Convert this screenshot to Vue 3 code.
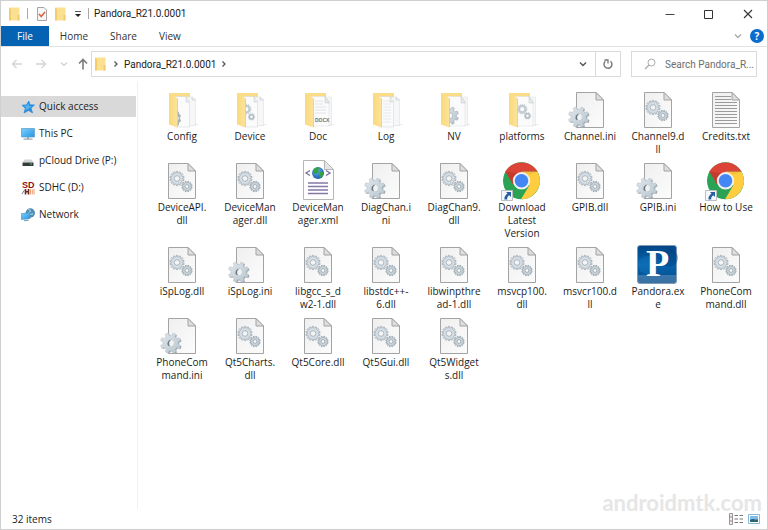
<script setup>
const places = [
  { name: 'Quick access', icon: 'star', active: true },
  { name: 'This PC', icon: 'pc' },
  { name: 'pCloud Drive (P:)', icon: 'drive' },
  { name: 'SDHC (D:)', icon: 'sd' },
  { name: 'Network', icon: 'network' },
]

// A "|" marks where a long file name wraps.
const files = [
  ['Config', 'folder-config'],
  ['Device', 'folder-device'],
  ['Doc', 'folder-doc'],
  ['Log', 'folder-log'],
  ['NV', 'folder-nv'],
  ['platforms', 'folder-platforms'],
  ['Channel.ini', 'ini'],
  ['Channel9.d|ll', 'dll'],
  ['Credits.txt', 'txt'],
  ['DeviceAPI.|dll', 'dll'],
  ['DeviceMan|ager.dll', 'dll'],
  ['DeviceMan|ager.xml', 'xml'],
  ['DiagChan.i|ni', 'ini'],
  ['DiagChan9.|dll', 'dll'],
  ['Download|Latest|Version', 'chrome'],
  ['GPIB.dll', 'dll'],
  ['GPIB.ini', 'ini'],
  ['How to Use', 'chrome'],
  ['iSpLog.dll', 'dll'],
  ['iSpLog.ini', 'ini'],
  ['libgcc_s_d|w2-1.dll', 'dll'],
  ['libstdc++-|6.dll', 'dll'],
  ['libwinpthre|ad-1.dll', 'dll'],
  ['msvcp100.|dll', 'dll'],
  ['msvcr100.d|ll', 'dll'],
  ['Pandora.ex|e', 'pandora'],
  ['PhoneCom|mand.dll', 'dll'],
  ['PhoneCom|mand.ini', 'ini'],
  ['Qt5Charts.|dll', 'dll'],
  ['Qt5Core.dll', 'dll'],
  ['Qt5Gui.dll', 'dll'],
  ['Qt5Widget|s.dll', 'dll'],
].map(([name, icon]) => ({ lines: name.split('|'), icon }))

function gear(cx, cy, outer, inner, hole, teeth) {
  const points = []
  const step = (Math.PI * 2) / teeth
  const at = (r, a) => `${(cx + r * Math.cos(a)).toFixed(2)} ${(cy + r * Math.sin(a)).toFixed(2)}`
  for (let i = 0; i < teeth; i++) {
    const a = (i + 0.5) * step
    points.push(at(inner, a - step * 0.3), at(outer, a - step * 0.18), at(outer, a + step * 0.18), at(inner, a + step * 0.3))
  }
  return `M${points.join('L')}ZM${cx - hole} ${cy}a${hole} ${hole} 0 1 0 ${hole * 2} 0a${hole} ${hole} 0 1 0 ${-hole * 2} 0Z`
}

const gearLarge = gear(15, 17.5, 7.2, 5.7, 2.8, 14)
const gearSmall = gear(25, 25.5, 5.3, 4.1, 1.9, 12)
const gearIni = gear(8.5, 27, 10.2, 7.6, 3.3, 8)
</script>

<template>
  <svg class="sprite" aria-hidden="true">
    <defs>
      <linearGradient id="paper" x1="0" y1="0" x2="1" y2="1">
        <stop offset="0" stop-color="#efefef" /><stop offset="1" stop-color="#fcfcfc" />
      </linearGradient>
      <linearGradient id="yellow" x1="0" y1="0" x2="1" y2="0">
        <stop offset="0" stop-color="#fbd97c" /><stop offset="1" stop-color="#fce49b" />
      </linearGradient>
      <linearGradient id="metal" x1="0" y1="0" x2="1" y2="1">
        <stop offset="0" stop-color="#dfe7ec" /><stop offset="1" stop-color="#b9c5cd" />
      </linearGradient>
      <linearGradient id="screen" x1="0" y1="0" x2="1" y2="1">
        <stop offset="0" stop-color="#7fd0fb" /><stop offset="1" stop-color="#2197e6" />
      </linearGradient>
      <linearGradient id="navy" x1="0" y1="0" x2="0" y2="1">
        <stop offset="0" stop-color="#034585" /><stop offset="0.5" stop-color="#0565ae" /><stop offset="1" stop-color="#064a88" />
      </linearGradient>
      <radialGradient id="globe" cx="0.4" cy="0.3" r="0.8">
        <stop offset="0" stop-color="#63b7f1" /><stop offset="1" stop-color="#134fa4" />
      </radialGradient>
    </defs>

    <symbol id="page" viewBox="0 0 40 40">
      <path d="M6.5 2.5H26L33.5 10V37.5H6.5Z" fill="url(#paper)" stroke="#a3a3a3" />
      <path d="M26 2.5V10H33.5Z" fill="#dedede" stroke="#a3a3a3" stroke-linejoin="round" />
    </symbol>
    <symbol id="dll" viewBox="0 0 40 40">
      <use href="#page" />
      <path :d="gearLarge" fill="#d5dee4" stroke="#98a4ad" stroke-width=".7" fill-rule="evenodd" />
      <path :d="gearSmall" fill="#c9d4db" stroke="#8e9ba5" stroke-width=".7" fill-rule="evenodd" />
    </symbol>
    <symbol id="ini" viewBox="0 0 40 40" overflow="visible">
      <use href="#page" />
      <path :d="gearIni" transform="translate(1.2 .9)" fill="#9ba7b0" fill-rule="evenodd" />
      <path :d="gearIni" fill="url(#metal)" stroke="#b9c4cb" stroke-width=".6" fill-rule="evenodd" />
      <circle cx="8.500" cy="27" r="3.300" fill="#f0f2f3" />
      <path d="M6.200 29.700a3.700 3.700 0 0 1 3-6a5 5 0 0 0-1.200 6.600Z" fill="#6c7780" />
    </symbol>
    <symbol id="txt" viewBox="0 0 40 40">
      <use href="#page" />
      <path d="M9 6.5H25M9 9.500H25M9 12.500H31M9 15.500H31M9 18.500H31M9 21.500H31M9 24.500H31M9 27.500H31M9 30.500H31M9 33.500H31" stroke="#9b9b9b" />
    </symbol>
    <symbol id="xml" viewBox="0 0 40 40" overflow="visible">
      <path d="M5.500 -.5H26.500L35.500 8.500V38.500H5.500Z" fill="#fff" stroke="#b6b6b6" />
      <path d="M26.500 -.5V8.500H35.500Z" fill="#e6e6e6" stroke="#b6b6b6" />
      <circle cx="20" cy="12" r="6" fill="url(#globe)" />
      <path d="M16 8c2-2 5-2 6-1l-2 2 1 2-3 2-3-1c0-2 0-3 1-4ZM22 11l3 0c1 3-1 5-3 6l-1-3Z" fill="#35a344" />
      <path d="M12 9.500L8 12l4 2.500M28 9.500l4 2.500-4 2.500" fill="none" stroke="#796b9f" stroke-width="1.300" />
      <path d="M10 22H30M10 25.500H30M10 29H30M10 32.500H30" stroke="#8578a7" stroke-width="1.400" />
    </symbol>

    <symbol id="folder-back" viewBox="0 0 40 40"><path d="M7 3H28V10L16 37 7 34Z" fill="#fbdc87" /></symbol>
    <symbol id="folder-front" viewBox="0 0 40 40">
      <path d="M7 3.500L15.700 8.500V37.500L7 34.500Z" fill="url(#yellow)" />
      <path d="M15.500 8.500V37" stroke="#e4c168" stroke-width=".6" />
    </symbol>
    <symbol id="sheets" viewBox="0 0 40 40">
      <path d="M31 34h6l-6 2Z" fill="#e1e1e1" />
      <path d="M21 7H31L33.500 9.500V35.500H21Z" fill="#f6f7f8" stroke="#dfe1e3" stroke-width=".6" />
      <path d="M13 6.500H24L27.500 11V37H13Z" fill="#fbfbfc" stroke="#d5d8da" stroke-width=".6" />
      <path d="M24 6.500V12h3.500M30 7v3h3.500" fill="#e9ebec" stroke="#c8cccf" stroke-width=".6" />
    </symbol>
    <symbol id="sheet" viewBox="0 0 40 40">
      <path d="M31 34h6l-6 2Z" fill="#e1e1e1" />
      <path d="M21 7H33.500V35.500H21Z" fill="#f6f7f8" stroke="#dfe1e3" stroke-width=".6" />
      <path d="M13 6.500H27L31 11V36H13Z" fill="#fbfbfc" stroke="#dfe1e3" stroke-width=".6" />
      <path d="M27 6.500V13l4.500 0Z" fill="#e6e8e9" stroke="#c8cccf" stroke-width=".6" />
    </symbol>
    <symbol id="folder-config" viewBox="0 0 40 40">
      <use href="#folder-back" /><use href="#sheets" />
      <path d="M15 21l2 1 0 2 2 1-1 3 1 3-2 2 0 2-2 1Z" fill="#aab3b9" /><path d="M15 26l2 2-2 4Z" fill="#fff" />
      <use href="#folder-front" />
    </symbol>
    <symbol id="folder-device" viewBox="0 0 40 40">
      <use href="#folder-back" /><use href="#sheets" />
      <path :d="gearLarge" transform="translate(5 6) scale(.75)" fill="#c1cbd1" fill-rule="evenodd" />
      <path :d="gearSmall" transform="translate(4 9) scale(.7)" fill="#b2bec5" fill-rule="evenodd" />
      <use href="#folder-front" />
    </symbol>
    <symbol id="folder-doc" viewBox="0 0 40 40">
      <use href="#folder-back" /><use href="#sheet" />
      <path d="M17 11H25M17 14H25M17 17H28M17 20H28M17 23H28" stroke="#dadedf" stroke-width=".8" />
      <use href="#folder-front" />
    </symbol>
    <symbol id="folder-log" viewBox="0 0 40 40">
      <use href="#folder-back" /><use href="#sheets" />
      <path d="M17 11H23M17 14H25M17 17H25M17 20H25M17 23H25M17 26H25M17 29H25M17 32H25" stroke="#e3e5e6" stroke-width=".8" />
      <use href="#folder-front" />
    </symbol>
    <symbol id="folder-nv" viewBox="0 0 40 40">
      <use href="#folder-back" /><use href="#sheet" />
      <path :d="gearIni" transform="translate(8.500 2.500) scale(.86)" fill="url(#metal)" stroke="#98a4ad" stroke-width=".7" fill-rule="evenodd" />
      <use href="#folder-front" />
    </symbol>
    <symbol id="folder-platforms" viewBox="0 0 40 40">
      <use href="#folder-back" /><use href="#sheet" />
      <path :d="gearLarge" transform="translate(9 6) scale(.75)" fill="#c1cbd1" fill-rule="evenodd" />
      <path :d="gearSmall" transform="translate(8 8) scale(.7)" fill="#b2bec5" fill-rule="evenodd" />
      <use href="#folder-front" />
    </symbol>

    <symbol id="chrome" viewBox="0 0 40 40" overflow="visible">
      <circle cx="19.500" cy="19.800" r="18.500" fill="#2aa354" />
      <path d="M3.500 10.500A18.500 18.500 0 0 1 35.500 10.800H19.500L11.700 24.200Z" fill="#db4437" />
      <path d="M35.500 10.800A18.500 18.500 0 0 1 19 38.300L27.400 24.300 19.500 10.800Z" fill="#ffcd40" />
      <path d="M3.500 10.500L11.700 24.200 15 12Z" fill="#c43b30" />
      <path d="M19.500 10.800H35.500L27.500 13.500Z" fill="#e9b537" opacity=".5" />
      <circle cx="19.500" cy="19.800" r="8.700" fill="#f1f1f1" />
      <circle cx="19.500" cy="19.800" r="6.800" fill="#4387f4" />
      <path d="M-.5 29.500H10.500V39.500H-.5Z" fill="#f5f7f9" stroke="#b9bec3" />
      <path d="M4 31h5v5L7.300 34.300C5.500 35.500 5 37 5.200 38.500H2.500C2 36 3.500 34 5.500 32.500Z" fill="#265da3" />
    </symbol>
    <symbol id="pandora" viewBox="0 0 40 40" overflow="visible">
      <rect x="-.5" y=".5" width="39" height="38" rx="2.500" fill="url(#navy)" stroke="#7f9bb8" />
      <circle cx="9" cy="20" r="9" fill="#1a7dc2" opacity=".35" />
      <circle cx="31" cy="13" r="9" fill="#013c78" opacity=".4" />
      <path d="M0 30H38V38H0Z" fill="#8aa9c8" opacity=".4" />
    </symbol>

    <symbol id="folder-mini" viewBox="0 0 14 14">
      <path d="M1 .5H11.500V13.500H1Z" fill="#fce092" />
      <path d="M1 1L3 2V13.500H1ZM9.500 8h2v5.500h-2Z" fill="#f3cd6c" />
    </symbol>
    <symbol id="star" viewBox="0 0 14 14">
      <path d="M7.800 1l1.200 3.800 4.500 .2-3.500 3 1.500 4.800L7.500 10.500 3 13l1.300-4.500L1 5.200l4.500-.3Z" fill="#2c8fdd" stroke="#2c8fdd" stroke-width=".8" />
      <path d="M7.500 3.500l.7 2.700 2.500.2-2.500 1.500-4 2.500 1-3-2-1.500 3-.3Z" fill="#58b5f1" />
    </symbol>
    <symbol id="pc" viewBox="0 0 14 14">
      <path d="M.5 1.500H13.500V10H.5Z" fill="url(#screen)" stroke="#5b9bc8" stroke-width=".7" />
      <path d="M6 10h2v1.500h3.500v1.200h-9v-1.200H6Z" fill="#9aaab5" />
    </symbol>
    <symbol id="drive" viewBox="0 0 14 14">
      <path d="M3.500 5.500H10.500L12.500 8.500H1.500Z" fill="#d2d5d7" />
      <rect x="1.500" y="8.500" width="11" height="3.500" rx=".5" fill="#363b3d" /><path d="M9 10h2" stroke="#57c46a" />
    </symbol>
    <symbol id="sd" viewBox="0 0 14 14">
      <path d="M4.500 8v5.500M7.500 8v5.500M4.500 10.700h3" stroke="#6e2720" stroke-width="1.600" />
      <path d="M9.500 8v5.500M11.300 8.500v5M13 8v5.500" stroke="#e9a070" /><path d="M1 13L3.500 9" stroke="#7d8287" />
    </symbol>
    <symbol id="network" viewBox="0 0 14 14">
      <circle cx="9.300" cy="5" r="4.700" fill="#4f8fb7" /><path d="M7 1.500c3 0 3 2 1 3s2 3 4 1" fill="none" stroke="#a2d0df" stroke-width="1.200" />
      <path d="M.5 5.500L9 4.800V10.500L.5 11.500Z" fill="url(#screen)" stroke="#4688b5" stroke-width=".6" />
      <path d="M3 12l4-.5 1 1.200-5 .6Z" fill="#7ba6c2" />
    </symbol>
    <symbol id="chevron-down" viewBox="0 0 10 10"><path d="M2 3.500L5 6.500 8 3.500" fill="none" stroke="currentColor" stroke-width="1.400" /></symbol>
    <symbol id="chevron-right" viewBox="0 0 10 10"><path d="M3.500 2.500L6 5 3.500 7.500" fill="none" stroke="currentColor" stroke-width="1.300" /></symbol>
    <symbol id="arrow" viewBox="0 0 12 12"><path d="M11 6H1.500M5.500 2L1.500 6 5.500 10" fill="none" stroke="currentColor" stroke-width="1.300" /></symbol>
  </svg>

  <div class="window">
    <header class="titlebar">
      <svg class="i14" aria-hidden="true"><use href="#folder-mini" /></svg>
      <span class="sep"></span>
      <button class="icon-btn check" aria-label="Properties">
        <svg viewBox="0 0 14 14" class="i14"><path d="M2.500 .5H9L11.500 3V13.500H2.500Z" fill="#f6f6f6" stroke="#a5a5a5" /><path d="M4 7l2.200 2.500L10 5" fill="none" stroke="#dc6545" stroke-width="1.600" /></svg>
      </button>
      <button class="icon-btn" aria-label="New folder"><svg class="i14"><use href="#folder-mini" /></svg></button>
      <button class="icon-btn" aria-label="Customize toolbar">
        <svg viewBox="0 0 10 10" class="i10"><path d="M2 2.500H8" stroke="#555" /><path d="M2 5H8L5 8Z" fill="#222" /></svg>
      </button>
      <span class="sep"></span>
      <h1>Pandora_R21.0.0001</h1>
      <div class="controls">
        <button class="icon-btn" aria-label="Minimize"><svg viewBox="0 0 10 10" class="i10"><path d="M.5 5.500H9.500" stroke="#444" /></svg></button>
        <button class="icon-btn" aria-label="Maximize"><svg viewBox="0 0 10 10" class="i10"><path d="M.5 1.500H8.500V9.500H.5Z" fill="none" stroke="#333" /></svg></button>
        <button class="icon-btn" aria-label="Close"><svg viewBox="0 0 10 10" class="i10"><path d="M1 1L9 9M9 1L1 9" stroke="#333" stroke-width="1.100" /></svg></button>
      </div>
    </header>

    <nav class="tabs" aria-label="Ribbon">
      <button class="tab file">File</button>
      <button class="tab">Home</button>
      <button class="tab">Share</button>
      <button class="tab">View</button>
      <div class="help">
        <button class="icon-btn faint" aria-label="Expand ribbon"><svg class="i10"><use href="#chevron-down" /></svg></button>
        <button class="round" aria-label="Help">?</button>
      </div>
    </nav>

    <div class="address-row">
      <div class="history">
        <button class="icon-btn pale" aria-label="Back"><svg class="i12"><use href="#arrow" /></svg></button>
        <button class="icon-btn pale" aria-label="Forward"><svg class="i12 flip"><use href="#arrow" /></svg></button>
        <button class="icon-btn pale" aria-label="Recent locations"><svg class="i10"><use href="#chevron-down" /></svg></button>
        <button class="icon-btn up" aria-label="Up"><svg viewBox="0 0 12 12" class="i12"><path d="M6 11.500V1.500M2 5.500L6 1.500 10 5.500" fill="none" stroke="#7c7c7c" stroke-width="1.600" /></svg></button>
      </div>
      <div class="address">
        <svg class="i14" aria-hidden="true"><use href="#folder-mini" /></svg>
        <svg class="i10" aria-hidden="true"><use href="#chevron-right" /></svg>
        <a href="#">Pandora_R21.0.0001</a>
        <svg class="i10" aria-hidden="true"><use href="#chevron-right" /></svg>
        <button class="icon-btn drop" aria-label="Previous locations"><svg class="i10"><use href="#chevron-down" /></svg></button>
        <button class="icon-btn refresh" aria-label="Refresh">
          <svg viewBox="0 0 12 12" class="i12"><path d="M3.300 3.300A4 4 0 1 0 8.500 3.200" fill="none" stroke="#777" stroke-width="1.400" /><path d="M2.500 2H6V5.500" fill="none" stroke="#777" stroke-width="1.300" /></svg>
        </button>
      </div>
      <label class="search">
        <svg viewBox="0 0 12 12" class="i12" aria-hidden="true"><circle cx="7.500" cy="4.500" r="3.500" fill="none" stroke="#aaa" /><path d="M5 7L1 11" stroke="#aaa" stroke-width="1.300" /></svg>
        <input type="text" aria-label="Search" placeholder="Search Pandora_R..." />
      </label>
    </div>

    <div class="body">
      <nav class="sidebar" aria-label="Places">
        <a v-for="place in places" :key="place.name" href="#" class="place" :class="{ active: place.active }">
          <svg class="i14" aria-hidden="true">
            <use :href="'#' + place.icon" />
            <text v-if="place.icon === 'sd'" x="1" y="7" class="sd-mark">SD</text>
          </svg>
          {{ place.name }}
        </a>
      </nav>
      <main class="files">
        <a v-for="(file, i) in files" :key="i" href="#" class="entry">
          <svg class="entry-icon" viewBox="0 0 40 40" aria-hidden="true">
            <use :href="'#' + file.icon" />
            <text v-if="file.icon === 'pandora'" x="19.500" y="31" text-anchor="middle" class="pandora-mark">P</text>
            <text v-if="file.icon === 'folder-doc'" x="17" y="32" class="docx-mark">DOCX</text>
          </svg>
          <span v-for="line in file.lines" :key="line" class="line">{{ line }}</span>
        </a>
      </main>
    </div>

    <footer class="status">
      <span>32 items</span>
      <div class="views">
        <button class="icon-btn" aria-label="Details view">
          <svg viewBox="0 0 14 12" class="view"><path d="M.5 .5H3.500V11.500H.5Z" fill="#eee" stroke="#999" /><path d="M1 4h2M1 8h2" stroke="#b77" /><path d="M5.500 2.500H9M10.500 2.500H14M5.500 6H9M10.500 6H14M5.500 9.500H9M10.500 9.500H14" stroke="#777" /></svg>
        </button>
        <button class="icon-btn" aria-label="Large icons view">
          <svg viewBox="0 0 14 12" class="view"><path d="M1.500 1.500H12.500V10.500H1.500Z" fill="#fff" stroke="#8ab8d8" /><path d="M3 3H11V9H3Z" fill="#7dbdf0" /><path d="M3 7c3-2 4 0 8-.5V9H3Z" fill="#2c6470" /></svg>
        </button>
      </div>
      <span class="watermark">androidmtk.com</span>
    </footer>
  </div>
</template>

<style>
body {
  margin: 0;
}
</style>

<style scoped>
.sprite {
  position: absolute;
  width: 0;
  height: 0;
}
.window {
  box-sizing: border-box;
  min-height: 100vh;
  display: flex;
  flex-direction: column;
  border: 1px solid #cfcfcf;
  background: #fff;
  color: #1c1c1c;
  font-family: "Open Sans", "Noto Sans", sans-serif;
  font-size: 10px;
  line-height: 13px;
}
svg {
  display: block;
  flex: none;
}
a {
  color: inherit;
  text-decoration: none;
}
button,
input {
  font: inherit;
  color: inherit;
}
.i10 { width: 10px; height: 10px; }
.i12 { width: 12px; height: 12px; }
.i14 { width: 14px; height: 14px; }
.flip { transform: scaleX(-1); }
.icon-btn {
  display: flex;
  align-items: center;
  justify-content: center;
  padding: 0;
  border: 0;
  background: none;
}
.titlebar {
  display: flex;
  align-items: center;
  height: 25px;
  padding-left: 7px;
  gap: 5px;
}
.titlebar h1,
.address a,
.search input {
  margin: 0;
  font-family: Roboto, "Open Sans", sans-serif;
  font-size: 10px;
  font-weight: 400;
}
.sep {
  width: 1px;
  height: 11px;
  background: #a8a8a8;
}
.check {
  margin-left: 2px;
}
.controls {
  display: flex;
  gap: 29px;
  margin-left: auto;
  padding-right: 14px;
}
.tabs {
  display: flex;
  height: 20px;
  border-bottom: 1px solid #e2e3e4;
}
.tab {
  padding: 0 11px;
  border: 0;
  background: none;
  color: #333;
}
.tab.file {
  padding: 0 16px;
  background: #0663b3;
  color: #fff;
}
.help {
  display: flex;
  align-items: center;
  gap: 7px;
  margin-left: auto;
  padding-right: 3px;
}
.faint {
  color: #aaa;
}
.round {
  width: 14px;
  height: 14px;
  padding: 0;
  border: 0;
  border-radius: 50%;
  background: #0a6ccc;
  color: #fff;
  font-weight: 700;
}
.address-row {
  display: flex;
  gap: 10px;
  padding: 4px 10px;
}
.history {
  display: flex;
  align-items: center;
  gap: 12px;
  width: 80px;
}
.history .up {
  margin-left: -4px;
}
.pale {
  color: #d4d4d4;
}
.address,
.search {
  display: flex;
  align-items: center;
  box-sizing: border-box;
  height: 26px;
  border: 1px solid #d9d9d9;
}
.address {
  flex: 1;
  margin-left: -10px;
  padding-left: 2px;
  gap: 3px;
  color: #555;
}
.address a {
  color: #1c1c1c;
}
.drop {
  margin-left: auto;
  width: 14px;
}
.refresh {
  align-self: stretch;
  width: 25px;
  margin-left: 2px;
  border-left: 1px solid #d9d9d9;
}
.search {
  width: 126px;
  padding-left: 12px;
  gap: 9px;
}
.search input {
  flex: 1;
  min-width: 0;
  padding: 0;
  border: 0;
  outline: 0;
  background: none;
}
.search input::placeholder {
  color: #6d6d6d;
  opacity: 1;
}
.body {
  display: flex;
  flex: 1;
}
.sidebar {
  display: flex;
  flex-direction: column;
  gap: 6px;
  width: 136px;
  padding-top: 15px;
  border-right: 1px solid #f0f0f0;
}
.place {
  display: flex;
  align-items: center;
  gap: 4px;
  height: 21px;
  margin-right: 1px;
  padding-left: 20px;
}
.place.active {
  background: #d9d9d9;
}
.files {
  flex: 1;
  display: grid;
  grid-template-columns: repeat(auto-fill, 68px);
  align-content: start;
  padding: 9px 0 0 10px;
}
.entry {
  display: flex;
  flex-direction: column;
  align-items: center;
  min-height: 66px;
  padding-bottom: 5px;
}
.entry-icon {
  width: 40px;
  height: 40px;
  overflow: visible;
}
.line {
  white-space: nowrap;
}
.sd-mark,
.docx-mark {
  font-family: "Liberation Sans", Arial, sans-serif;
  font-weight: 700;
}
.sd-mark {
  fill: #8c1212;
  font-size: 9px;
}
.docx-mark {
  fill: #717171;
  font-size: 5px;
}
.pandora-mark {
  fill: #fff;
  font-family: "Liberation Serif", "Times New Roman", serif;
  font-size: 38px;
  font-weight: 700;
}
.status {
  position: relative;
  display: flex;
  align-items: center;
  justify-content: space-between;
  height: 20px;
  padding: 0 6px 0 11px;
}
.views {
  display: flex;
  gap: 4px;
}
.view {
  width: 14px;
  height: 12px;
}
.watermark {
  position: absolute;
  right: 5px;
  bottom: 14px;
  color: #e6e6e6;
  font-family: Lato, "Open Sans", sans-serif;
  font-size: 22px;
  font-weight: 700;
  line-height: 24px;
}
</style>
